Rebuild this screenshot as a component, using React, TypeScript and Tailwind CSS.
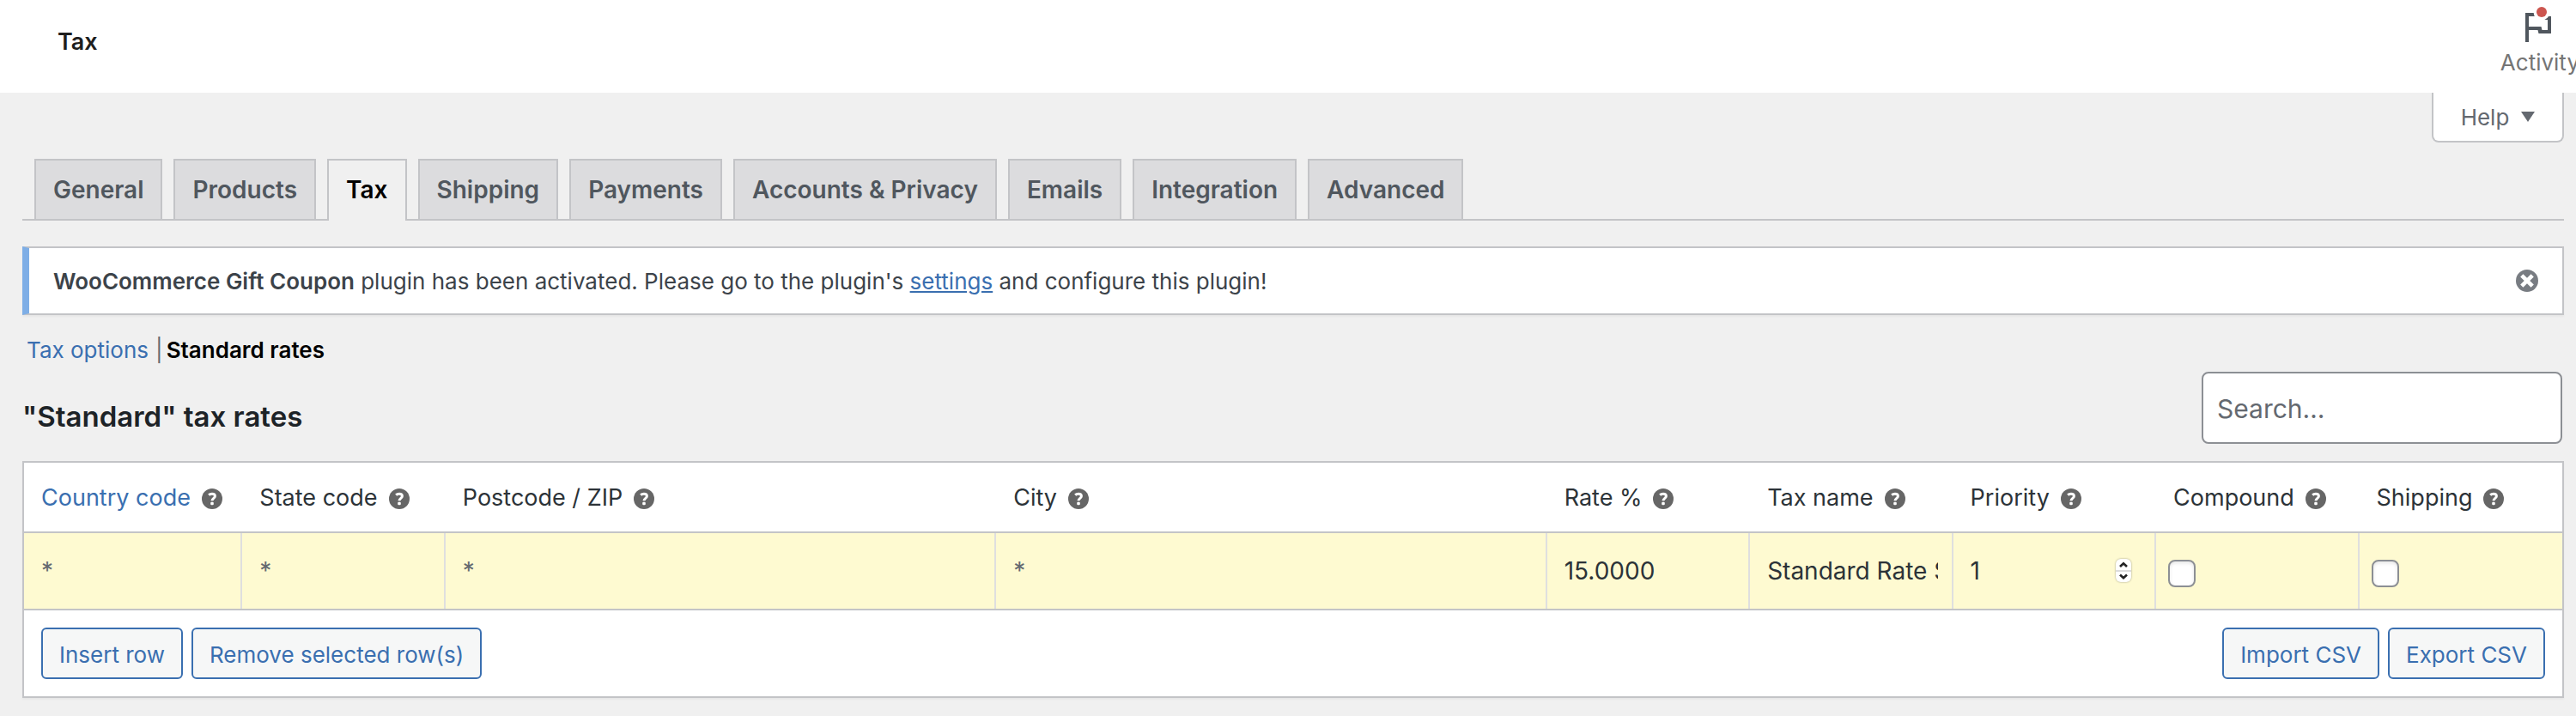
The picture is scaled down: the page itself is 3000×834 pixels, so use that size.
import { useState } from "react";

const TABS = ["General", "Products", "Tax", "Shipping", "Payments", "Accounts & Privacy", "Emails", "Integration", "Advanced"];

const COLUMNS = [
  { label: "Country code", width: "" },
  { label: "State code", width: "w-[8%]" },
  { label: "Postcode / ZIP", width: "w-[21.7%]" },
  { label: "City", width: "w-[21.7%]" },
  { label: "Rate %", width: "w-[8%]" },
  { label: "Tax name", width: "w-[8%]" },
  { label: "Priority", width: "w-[8%]" },
  { label: "Compound", width: "w-[8%]" },
  { label: "Shipping", width: "w-[8%]" },
];

function FlagIcon() {
  return (
    <svg width="48" height="48" viewBox="0 0 48 48" className="overflow-visible" aria-hidden="true">
      <path d="M7 9h18v4H11v12h14.500l1 4H33V17h-9v-4h13v20H22.500l-1-4H11v14H7z" fill="#50575e" />
      <circle cx="26" cy="8" r="9.500" fill="#fff" />
      <circle cx="26" cy="8" r="6" fill="#cc5650" />
    </svg>
  );
}

function HelpTip() {
  return (
    <svg width="24" height="24" viewBox="0 0 24 24" className="mt-0.5 shrink-0" aria-hidden="true">
      <circle cx="12" cy="12" r="12" fill="#666" />
      <path d="M8.200 7.600c.9-.9 2.200-1.400 3.700-1.400 2.100 0 3.500 1 3.500 2.700 0 2.500-3.400 2.400-3.400 5.400" fill="none" stroke="#fff" strokeWidth="3" />
      <rect x="10.200" y="15.800" width="3.600" height="3.400" rx="1.200" fill="#fff" />
    </svg>
  );
}

function CloseIcon() {
  return (
    <svg width="26" height="26" viewBox="0 0 26 26" aria-hidden="true">
      <circle cx="13" cy="13" r="13" fill="#787c82" />
      <path d="M6.800 6.800l12.400 12.400M19.200 6.800L6.800 19.200" stroke="#fff" strokeWidth="4.600" />
    </svg>
  );
}

function Stepper() {
  return (
    <svg width="20" height="32" viewBox="0 0 20 32" className="shrink-0 drop-shadow-[0_0_1px_rgba(0,0,0,0.35)]" aria-hidden="true">
      <rect x="1" y="2" width="18" height="27" rx="6" fill="#fff" />
      <rect x="1" y="15" width="18" height="2" fill="#dcdcdc" />
      <path d="M6 11l4-3.800 4 3.800M6 20.500l4 3.800 4-3.800" fill="none" stroke="#222" strokeWidth="2.600" />
    </svg>
  );
}

function ActionButton({ children }: { children: string }) {
  return (
    <button type="button" className="h-[60px] rounded-md border-2 border-[#3a6fb0] bg-[#f6f7f7] px-[19px] pt-0.5 text-[26px] text-[#3a6fb0]">
      {children}
    </button>
  );
}

const FIELD = "block h-[88px] w-full bg-transparent text-[28px] text-[#2c3338] outline-none placeholder:text-[#646970]";

export default function App() {
  const [taxName, setTaxName] = useState("Standard Rate S");
  const [rate, setRate] = useState("15.0000");
  const [priority, setPriority] = useState("1");

  return (
    <div className="min-h-screen overflow-x-hidden bg-[#f0f0f0] font-['Inter',sans-serif] text-[26px] text-[#3c434a]">
      <header className="flex h-[108px] items-start justify-between bg-white pl-[67px]">
        <h1 className="pt-[33px] text-[27px] leading-8 font-semibold text-[#1e1e1e]">Tax</h1>
        <button type="button" className="-mr-1 flex flex-col items-center pt-1.5 text-[#757575]">
          <FlagIcon />
          <span className="leading-[38px]">Activity</span>
        </button>
      </header>

      <main className="pr-3.5 pl-[26px]">
        <div className="flex justify-end">
          <button type="button" className="flex h-[58px] w-[154px] items-center justify-center gap-3.5 rounded-b-lg border-2 border-t-0 border-[#c3c4c7] bg-white text-[#646970]">
            Help
            <svg width="16" height="12" viewBox="0 0 16 12" aria-hidden="true">
              <path d="M0 0h16L8 12z" fill="currentColor" />
            </svg>
          </button>
        </div>

        <nav className="mt-[19px] flex gap-[13px] border-b-2 border-[#c3c4c7] pl-3.5">
          {TABS.map((tab) => (
            <a
              key={tab}
              href="#"
              className={
                tab === "Tax"
                  ? "-mb-0.5 border-2 border-b-0 border-[#c3c4c7] bg-[#f0f0f0] px-5 pt-2.5 pb-3 text-[28px] leading-[48px] font-semibold text-black"
                  : "border-2 border-b-0 border-[#c3c4c7] bg-[#dcdcde] px-5 py-2.5 text-[28px] leading-[48px] font-semibold text-[#50575e]"
              }
            >
              {tab}
            </a>
          ))}
        </nav>

        <div className="mt-[30px] flex h-20 items-center justify-between border-2 border-l-8 border-[#c3c4c7] border-l-[#7eaee6] bg-white pr-7 pl-7 shadow-[0_2px_2px_rgba(0,0,0,0.04)]">
          <p>
            <strong className="font-semibold">WooCommerce Gift Coupon</strong> plugin has been activated. Please go to the plugin's{" "}
            <a href="#" className="text-[#3a6fb0] underline">settings</a> and configure this plugin!
          </p>
          <button type="button" aria-label="Dismiss" className="p-0">
            <CloseIcon />
          </button>
        </div>

        <div className="mt-5 flex h-10 items-center pl-[5px]">
          <a href="#" className="text-[#3a6fb0]">Tax options</a>
          <span className="pr-1 pl-2 text-[#646970]">|</span>
          <a href="#" className="font-semibold text-black">Standard rates</a>
        </div>

        <div className="mt-1.5 flex items-start justify-between pr-0.5">
          <h2 className="pt-8 text-[33px] leading-10 font-semibold text-[#1d2327]">"Standard" tax rates</h2>
          <input
            type="search"
            aria-label="Search"
            placeholder="Search…"
            className="h-[84px] w-[420px] rounded-lg border-2 border-[#8c8f94] bg-white px-4 pt-0.5 text-[30px] placeholder:text-[#646970]"
          />
        </div>

        <div className="mt-5 border-2 border-[#c3c4c7] bg-white shadow-[0_2px_2px_rgba(0,0,0,0.04)]">
          <table className="w-full table-fixed border-separate border-spacing-0">
            <thead>
              <tr>
                {COLUMNS.map((column, index) => (
                  <th key={column.label} scope="col" className={`${column.width} h-[82px] border-b-2 border-[#c3c4c7] px-5 pt-0.5 text-left text-[27px] font-normal text-[#2c3338]`}>
                    <span className="flex items-center gap-[13px] whitespace-nowrap">
                      {index === 0 ? <a href="#" className="text-[#3a6fb0]">{column.label}</a> : column.label}
                      <HelpTip />
                    </span>
                  </th>
                ))}
              </tr>
            </thead>
            <tbody className="bg-[#fefad1]">
              <tr>
                {COLUMNS.slice(0, 4).map((column) => (
                  <td key={column.label} className="border-r-2 border-[#dfdfdf] px-5">
                    <input type="text" aria-label={column.label} placeholder="*" className={FIELD} />
                  </td>
                ))}
                <td className="border-r-2 border-[#dfdfdf] px-5">
                  <input type="text" aria-label="Rate %" value={rate} onChange={(e) => setRate(e.target.value)} className={FIELD} />
                </td>
                <td className="border-r-2 border-[#dfdfdf] pr-4 pl-5">
                  <input type="text" aria-label="Tax name" value={taxName} onChange={(e) => setTaxName(e.target.value)} className={FIELD} />
                </td>
                <td className="border-r-2 border-[#dfdfdf] pr-[26px] pl-5">
                  <div className="flex items-center">
                    <input
                      type="number"
                      aria-label="Priority"
                      value={priority}
                      onChange={(e) => setPriority(e.target.value)}
                      className={`${FIELD} [appearance:textfield]`}
                    />
                    <Stepper />
                  </div>
                </td>
                {["Compound", "Shipping"].map((label) => (
                  <td key={label} className="border-[#dfdfdf] px-3.5 not-last:border-r-2">
                    <input
                      type="checkbox"
                      aria-label={label}
                      className="mt-1.5 block size-8 appearance-none rounded-lg border-2 border-[#8c8f94] bg-white shadow-[inset_0_2px_4px_rgba(0,0,0,0.1)]"
                    />
                  </td>
                ))}
              </tr>
            </tbody>
          </table>
          <div className="flex justify-between border-t-2 border-[#c3c4c7] p-5">
            <div className="flex gap-2.5">
              <ActionButton>Insert row</ActionButton>
              <ActionButton>Remove selected row(s)</ActionButton>
            </div>
            <div className="flex gap-2.5">
              <ActionButton>Import CSV</ActionButton>
              <ActionButton>Export CSV</ActionButton>
            </div>
          </div>
        </div>
      </main>
    </div>
  );
}
